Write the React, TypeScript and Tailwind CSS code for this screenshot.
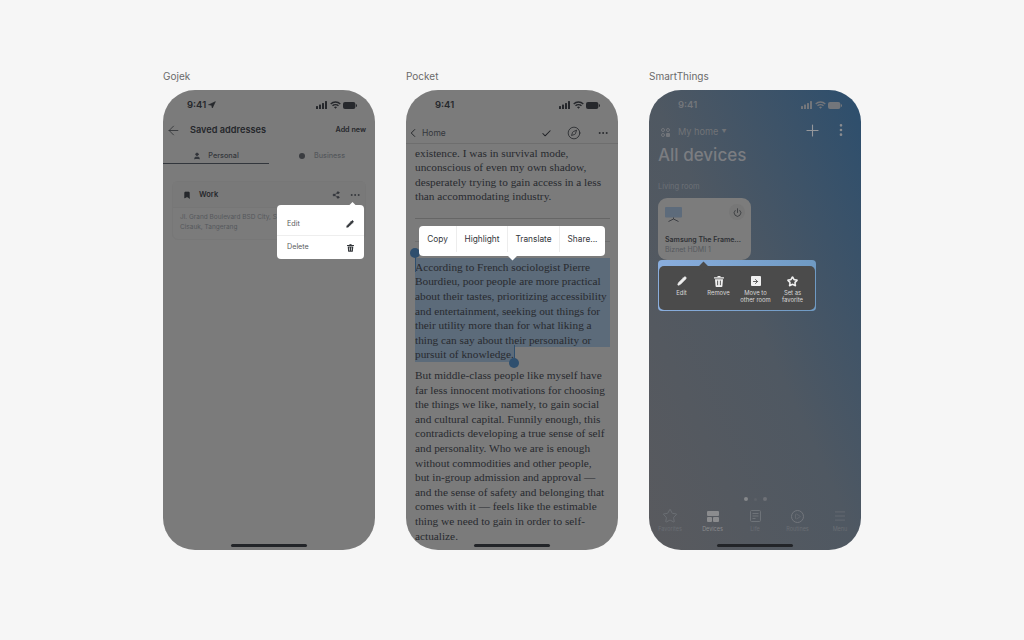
import React from "react";
import { ArrowLeft, ChevronLeft, Check, Compass, MoreHorizontal, MoreVertical, Plus, Power, Pencil, Bookmark, Share2, User, Star, Navigation, Play, Menu as MenuIcon, ArrowRight } from "lucide-react";

const Signal = ({ c }: { c: string }) => (
  <svg width="11" height="8" viewBox="0 0 11 8" fill={c}>
    <rect x="0" y="5" width="2" height="3" rx=".5" />
    <rect x="3" y="3.5" width="2" height="4.5" rx=".5" />
    <rect x="6" y="2" width="2" height="6" rx=".5" />
    <rect x="9" y="0" width="2" height="8" rx=".5" />
  </svg>
);
const Wifi = ({ c }: { c: string }) => (
  <svg width="11" height="8" viewBox="0 0 11 8" fill="none" stroke={c} strokeWidth="1.4">
    <path d="M.7 2.9a7 7 0 0 1 9.6 0" />
    <path d="M2.5 4.8a4.4 4.4 0 0 1 6 0" />
    <path d="M5.5 7.8 4 6.3a2 2 0 0 1 3 0z" fill={c} stroke="none" />
  </svg>
);
const Battery = ({ c }: { c: string }) => (
  <svg width="14" height="7" viewBox="0 0 14 7" fill={c}>
    <rect x="0" y="0" width="12.4" height="7" rx="2" />
    <rect x="13" y="2.3" width="1" height="2.4" rx=".5" />
  </svg>
);
const Trash = ({ c, slot, w, h }: { c: string; slot: string; w: number; h: number }) => (
  <svg width={w} height={h} viewBox="0 0 10 11" fill={c}>
    <rect x="3.5" y="0" width="3" height="1.2" />
    <rect x="0" y="1.2" width="10" height="1.4" rx=".4" />
    <path d="M1 3.2h8l-.6 7a.9.9 0 0 1-.9.8h-5a.9.9 0 0 1-.9-.8z" />
    <rect x="3.2" y="4.6" width=".9" height="4.6" fill={slot} />
    <rect x="5.9" y="4.6" width=".9" height="4.6" fill={slot} />
  </svg>
);

function Status({ c, arrow, left, right }: { c: string; arrow?: boolean; left: string; right: string }) {
  return (
    <div className={`flex h-[24px] shrink-0 items-center justify-between pb-[2px] pt-[8px] font-['Inter',sans-serif] ${left} ${right}`}>
      <div className="flex items-center gap-[2px] text-[9.5px] font-semibold leading-[14px]" style={{ color: c }}>
        9:41
        {arrow && <Navigation size={8} fill={c} stroke={c} />}
      </div>
      <div className="flex items-center gap-[2.5px]">
        <Signal c={c} />
        <Wifi c={c} />
        <Battery c={c} />
      </div>
    </div>
  );
}

function HomeBar() {
  return <div className="absolute bottom-[3px] left-[68px] h-[3px] w-[76px] rounded-full bg-[#222428]" />;
}

function Gojek() {
  return (
    <div className="relative flex h-[460px] w-[212px] flex-col overflow-hidden rounded-[32px] bg-[#7b7b7b]">
      <Status c="#26282c" arrow left="pl-[24px]" right="pr-[18px]" />
      <div className="mt-[6px] flex h-[20px] items-center pl-[3px] pr-[9px]">
        <ArrowLeft size={15} color="#2e3034" strokeWidth={1.3} />
        <span className="ml-[9px] text-[9.2px] font-semibold text-[#25272b]">Saved addresses</span>
        <span className="ml-auto text-[7.2px] font-semibold text-[#25272b]">Add new</span>
      </div>
      <div className="mt-[7px] flex h-[17px]">
        <div className="flex w-[106px] items-center justify-center gap-[7px] border-b border-[#32363c] pt-[2px] text-[7.3px] font-medium text-[#34373c]">
          <User size={8} fill="#34373c" color="#34373c" />
          Personal
        </div>
        <div className="flex flex-1 items-center justify-center gap-[9px] pt-[1px] text-[7.2px] font-medium text-[#55585c]">
          <div className="h-[6px] w-[6px] rounded-full bg-[#3a3c40]" />
          Business
        </div>
      </div>
      <div className="mx-[9px] mt-[17px] h-[59px] rounded-[6px] border border-[#777777]">
        <div className="flex h-[26px] items-center border-b border-[#767676] bg-[#797979] pl-[10px] pr-[4px]">
          <Bookmark size={8} fill="#26282c" color="#26282c" />
          <span className="ml-[8px] text-[7.5px] font-semibold text-[#25272b]">Work</span>
          <Share2 size={8} className="ml-auto" fill="#34373c" color="#34373c" />
          <MoreHorizontal size={12} className="ml-[9px]" color="#34373c" />
        </div>
        <div className="whitespace-nowrap pl-[7px] pt-[5px] text-[6.5px] leading-[9.5px] text-[#55585c]">
          Jl. Grand Boulevard BSD City, Sa
          <br />
          Cisauk, Tangerang
        </div>
      </div>
      <div className="absolute left-[114px] top-[115px] h-[54px] w-[87px] rounded-[4px] bg-white text-[7.2px] text-[#5a5c60]">
        <div className="absolute right-[9px] top-[-2px] h-[5px] w-[5px] rotate-45 bg-white" />
        <div className="mt-[8px] flex h-[23px] items-center justify-between border-b border-[#eeeeee] px-[10px]">
          Edit
          <Pencil size={8} fill="#33363a" color="#33363a" />
        </div>
        <div className="flex h-[23px] items-center justify-between px-[10px]">
          Delete
          <Trash c="#33363a" slot="#ffffff" w={7} h={8} />
        </div>
      </div>
      <HomeBar />
    </div>
  );
}

const intro = ["existence. I was in survival mode,", "unconscious of even my own shadow,", "desperately trying to gain access in a less", "than accommodating industry."];
const sel = ["According to French sociologist Pierre", "Bourdieu, poor people are more practical", "about their tastes, prioritizing accessibility", "and entertainment, seeking out things for", "their utility more than for what liking a", "thing can say about their personality or"];
const rest = ["But middle-class people like myself have", "far less innocent motivations for choosing", "the things we like, namely, to gain social", "and cultural capital. Funnily enough, this", "contradicts developing a true sense of self", "and personality. Who we are is enough", "without commodities and other people,", "but in-group admission and approval —", "and the sense of safety and belonging that", "comes with it — feels like the estimable", "thing we need to gain in order to self-", "actualize."];

function Pocket() {
  return (
    <div className="relative flex h-[460px] w-[212px] flex-col overflow-hidden rounded-[32px] bg-[#7b7b7b] font-['Liberation_Serif',serif] text-[11.3px] leading-[14.6px] text-[#282a2f]">
      <Status c="#26282c" left="pl-[29px]" right="pr-[18px]" />
      <div className="flex h-[30px] shrink-0 items-center border-b border-[#6e6e6e] pr-[9px] pt-[9px] font-['Inter',sans-serif] text-[8.5px] text-[#34373c]">
        <ChevronLeft size={14} color="#26282c" strokeWidth={1.7} />
        <span className="ml-[2px]">Home</span>
        <Check size={11} className="ml-auto" color="#202226" strokeWidth={2.2} />
        <Compass size={14} className="ml-[15.5px]" color="#26282c" strokeWidth={1.4} />
        <MoreHorizontal size={12} className="ml-[16px]" color="#26282c" />
      </div>
      <div className="whitespace-nowrap pl-[9px] pt-[1.5px]">
        {intro.map((t) => <div key={t}>{t}</div>)}
        <div className="mb-[22px] mr-[8px] mt-[14.5px] h-px bg-[#666666]" />
        <div className="mb-[17.5px] mr-[8px] h-px bg-[#6e6e6e]" />
        {sel.map((t, i) => (
          <div key={t} className={i === 0 ? "mr-[8px] -mt-[2px] bg-[#5c6b7a] pt-[2px]" : "mr-[8px] bg-[#5c6b7a]"}>{t}</div>
        ))}
        <div className="w-fit bg-[#5c6b7a] pr-[1px]">pursuit of knowledge.</div>
        <div className="mt-[6px]">
          {rest.map((t) => <div key={t}>{t}</div>)}
        </div>
      </div>
      <div className="absolute left-[4px] top-[158px] h-[10px] w-[10px] rounded-full bg-[#2f4f6e]" />
      <div className="absolute left-[8.5px] top-[163px] h-[19px] w-[1.5px] bg-[#2f4f6e]" />
      <div className="absolute left-[107.5px] top-[255px] h-[15px] w-[1.5px] bg-[#2f4f6e]" />
      <div className="absolute left-[103px] top-[268px] h-[10px] w-[10px] rounded-full bg-[#2f4f6e]" />
      <div className="absolute left-[13px] top-[136px] flex h-[30px] w-[186px] items-start rounded-[4px] bg-white font-['Inter',sans-serif] text-[8.3px] text-[#33363a]">
        <div className="flex h-[26px] w-[38px] items-center justify-center border-r border-[#ededed]">Copy</div>
        <div className="flex h-[26px] w-[51px] items-center justify-center border-r border-[#ededed]">Highlight</div>
        <div className="flex h-[26px] w-[52px] items-center justify-center border-r border-[#ededed]">Translate</div>
        <div className="flex h-[26px] flex-1 items-center justify-center">Share...</div>
        <div className="absolute bottom-[-3px] left-[90px] h-[7px] w-[7px] rotate-45 bg-white" />
      </div>
      <HomeBar />
    </div>
  );
}

const nav: [React.ReactNode, string, string][] = [
  [<Star key="s" size={16} color="#72767c" strokeWidth={1.1} />, "Favorites", "#6a6e74"],
  [
    <div key="d" className="grid h-[11px] w-[12px] grid-cols-2 gap-[1px]">
      <div className="col-span-2 rounded-[1px] bg-[#8b8c8e]" />
      <div className="rounded-[1px] bg-[#8b8c8e]" />
      <div className="rounded-[1px] bg-[#8b8c8e]" />
    </div>,
    "Devices",
    "#8b8c8e",
  ],
  [
    <svg key="l" width="11" height="12" viewBox="0 0 11 12" fill="none" stroke="#72767c" strokeWidth=".9">
      <rect x=".5" y=".5" width="10" height="11" rx="1" />
      <path d="M2.5 3.5h6M2.5 6h6M2.5 8.5h3" />
    </svg>,
    "Life",
    "#6a6e74",
  ],
  [<div key="r" className="flex h-[13px] w-[13px] items-center justify-center rounded-full border border-[#72767c]"><Play size={7} color="#72767c" /></div>, "Routines", "#6a6e74"],
  [<MenuIcon key="m" size={14} color="#72767c" strokeWidth={1} />, "Menu", "#6a6e74"],
];

function Action({ icon, label }: { icon: React.ReactNode; label: React.ReactNode }) {
  return (
    <div className="flex w-[37px] flex-col items-center">
      <div className="flex h-[14px] items-center">{icon}</div>
      <div className="mt-[1px] whitespace-nowrap text-center text-[5.9px] leading-[7px] text-[#d8d8d8]">{label}</div>
    </div>
  );
}

function SmartThings() {
  return (
    <div className="relative flex h-[460px] w-[212px] flex-col overflow-hidden rounded-[32px] bg-gradient-to-tr from-[#595a5e] via-[#4f5862] to-[#2c4e6d]">
      <Status c="#73767b" left="pl-[29px]" right="pr-[19px]" />
      <div className="mt-[8px] flex h-[20px] items-center pl-[12px] pr-[12px] text-[9.2px] text-[#707377]">
        <div className="grid h-[9px] w-[9px] grid-cols-2 gap-[1px]">
          <div className="rounded-full border border-[#73767b]" />
          <div className="rounded-full border border-[#73767b]" />
          <div className="rounded-full border border-[#73767b]" />
          <div className="rounded-[1px] bg-[#73767b]" />
        </div>
        <span className="ml-[8px]">My home</span>
        <span className="ml-[3px] text-[5px]">▼</span>
        <div className="ml-auto flex items-center gap-[11px] pb-[4px]">
          <Plus size={19} color="#95979b" strokeWidth={1.4} />
          <MoreVertical size={16} color="#8a8c90" />
        </div>
      </div>
      <div className="mt-[2px] pl-[9px] text-[17px] font-medium leading-[22px] text-[#7b7d81]">All devices</div>
      <div className="mt-[16px] pl-[9px] text-[7.5px] leading-[10px] text-[#6d7177]">Living room</div>
      <div className="ml-[9px] mt-[6px] h-[62px] w-[93px] rounded-[9px] bg-[#7c7c7c] pl-[7px] pr-[6px] pt-[6px]">
        <div className="flex items-start justify-between">
          <svg className="mt-[3px]" width="18" height="15" viewBox="0 0 18 15" fill="none">
            <rect x="0" y="0" width="17" height="10.5" rx="1" fill="#5d6b7b" />
            <path d="M8.5 10.5v1.5M3.5 14.5l5-2.5 5 2.5" stroke="#3a3d42" strokeWidth="1" />
          </svg>
          <div className="flex h-[16px] w-[16px] items-center justify-center rounded-full bg-[#777777]">
            <Power size={9} color="#26282c" strokeWidth={1.8} />
          </div>
        </div>
        <div className="mt-[13px] whitespace-nowrap text-[7px] font-semibold leading-[9.5px] text-[#2f3135]">Samsung The Frame...</div>
        <div className="text-[7px] leading-[9.5px] text-[#55585d]">Biznet HDMI 1</div>
      </div>
      <div className="relative ml-[9px] h-[51px] w-[158px] rounded-[4px] bg-gradient-to-r from-[#8aaede] to-[#6f9ac3]">
        <div className="absolute bottom-[1px] left-[1px] flex h-[44px] w-[156px] items-start justify-center rounded-[5px] bg-[#4b4b4b] pt-[8px]">
          <Action icon={<Pencil size={10} fill="#f0f0f0" color="#f0f0f0" />} label="Edit" />
          <Action icon={<Trash c="#f0f0f0" slot="#4b4b4b" w={10} h={11} />} label="Remove" />
          <Action
            icon={
              <div className="flex h-[10px] w-[10px] items-center justify-center rounded-[1px] bg-[#f0f0f0]">
                <ArrowRight size={7} color="#4b4b4b" strokeWidth={3} />
              </div>
            }
            label={<>Move to<br />other room</>}
          />
          <Action icon={<Star size={11} color="#f0f0f0" strokeWidth={3.4} />} label={<>Set as<br />favorite</>} />
        </div>
        <div className="absolute left-[41.5px] top-[3px] h-[7px] w-[7px] rotate-45 bg-[#4b4b4b]" />
      </div>
      <div className="mt-auto flex items-center justify-center gap-[6px] pb-[8px]">
        <div className="h-[4px] w-[4px] rounded-full bg-[#85878a]" />
        <div className="h-[3px] w-[3px] rounded-full bg-[#5d6168]" />
        <div className="h-[4px] w-[4px] rounded-full bg-[#6e7176]" />
      </div>
      <div className="mb-[17px] flex justify-between px-[2px]">
        {nav.map(([icon, label, color]) => (
          <div key={label} className="flex w-[38px] flex-col items-center">
            <div className="flex h-[14px] items-center">{icon}</div>
            <div className="mt-[3px] text-[5.5px] leading-[7px]" style={{ color }}>{label}</div>
          </div>
        ))}
      </div>
      <HomeBar />
    </div>
  );
}

export default function App() {
  const cols: [string, React.ReactNode][] = [
    ["Gojek", <Gojek key="g" />],
    ["Pocket", <Pocket key="p" />],
    ["SmartThings", <SmartThings key="s" />],
  ];
  return (
    <div className="flex h-[640px] w-[1024px] justify-center gap-[31px] bg-[#f6f6f6] pt-[69px] font-['Inter',sans-serif]">
      {cols.map(([name, phone]) => (
        <div key={name} className="w-[212px]">
          <div className="mb-[7px] text-[10px] leading-[14px] text-[#6a6a6a]">{name}</div>
          {phone}
        </div>
      ))}
    </div>
  );
}
